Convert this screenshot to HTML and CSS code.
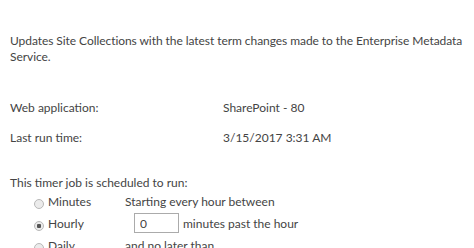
FILE: index.html
```html
<!DOCTYPE html>
<html lang="en">
<head>
    <meta charset="UTF-8">
    <title>Timer Job</title>
    <link rel="stylesheet" href="styles.css">
</head>
<body>

<div class="page">
    <p class="desc">Updates Site Collections with the latest term changes made to the Enterprise Metadata Service.</p>

    <div class="props">
        <div class="prop-label">Web application:</div>
        <div class="prop-value">SharePoint - 80</div>
        <div class="prop-label">Last run time:</div>
        <div class="prop-value">3/15/2017 3:31 AM</div>
    </div>

    <div class="schedule">
        <div class="schedule-title">This timer job is scheduled to run:</div>
        <div class="schedule-grid">
            <label class="opt"><input type="radio" name="freq"> Minutes</label>
            <div class="detail">Starting every hour between</div>

            <label class="opt"><input type="radio" name="freq" checked> Hourly</label>
            <div class="detail"><input type="text" class="mins" value="0"> minutes past the hour</div>

            <label class="opt"><input type="radio" name="freq"> Daily</label>
            <div class="detail">and no later than</div>
        </div>
    </div>
</div>

</body>
</html>
```

FILE: styles.css
```css
* {
    box-sizing: border-box;
}

body {
    margin: 0;
    font-family: Lato, "Open Sans", sans-serif;
    font-size: 12px;
    color: #444;
    background: #fff;
}

.page {
    padding: 0 4px 0 10px;
}

.desc {
    margin: 33px 0 0;
    letter-spacing: -0.06px;
    line-height: 16px;
}

.props {
    display: grid;
    grid-template-columns: 213px auto;
    grid-auto-rows: 30px;
    margin-top: 35px;
    line-height: 16px;
}

.schedule {
    margin-top: 15px;
}

.schedule-title {
    line-height: 15px;
}

.schedule-grid {
    display: grid;
    grid-template-columns: 115px auto;
    grid-auto-rows: 22px;
}

.opt {
    display: flex;
    align-items: center;
    padding-left: 24px;
}

.opt input {
    -webkit-appearance: none;
    appearance: none;
    width: 10px;
    height: 10px;
    margin: 5px 4px 0 0;
    border: 1px solid #b8b8b8;
    border-radius: 50%;
    background: #ebebeb;
}

.opt input:checked {
    background: radial-gradient(circle, #555 0, #555 2px, #ebebeb 2.5px);
}

.detail {
    display: flex;
    align-items: center;
}

.mins {
    width: 45px;
    height: 20px;
    margin: 0 4px 0 9px;
    padding: 0 5px;
    border: 1px solid #ababab;
    font: inherit;
    color: #444;
}
```
